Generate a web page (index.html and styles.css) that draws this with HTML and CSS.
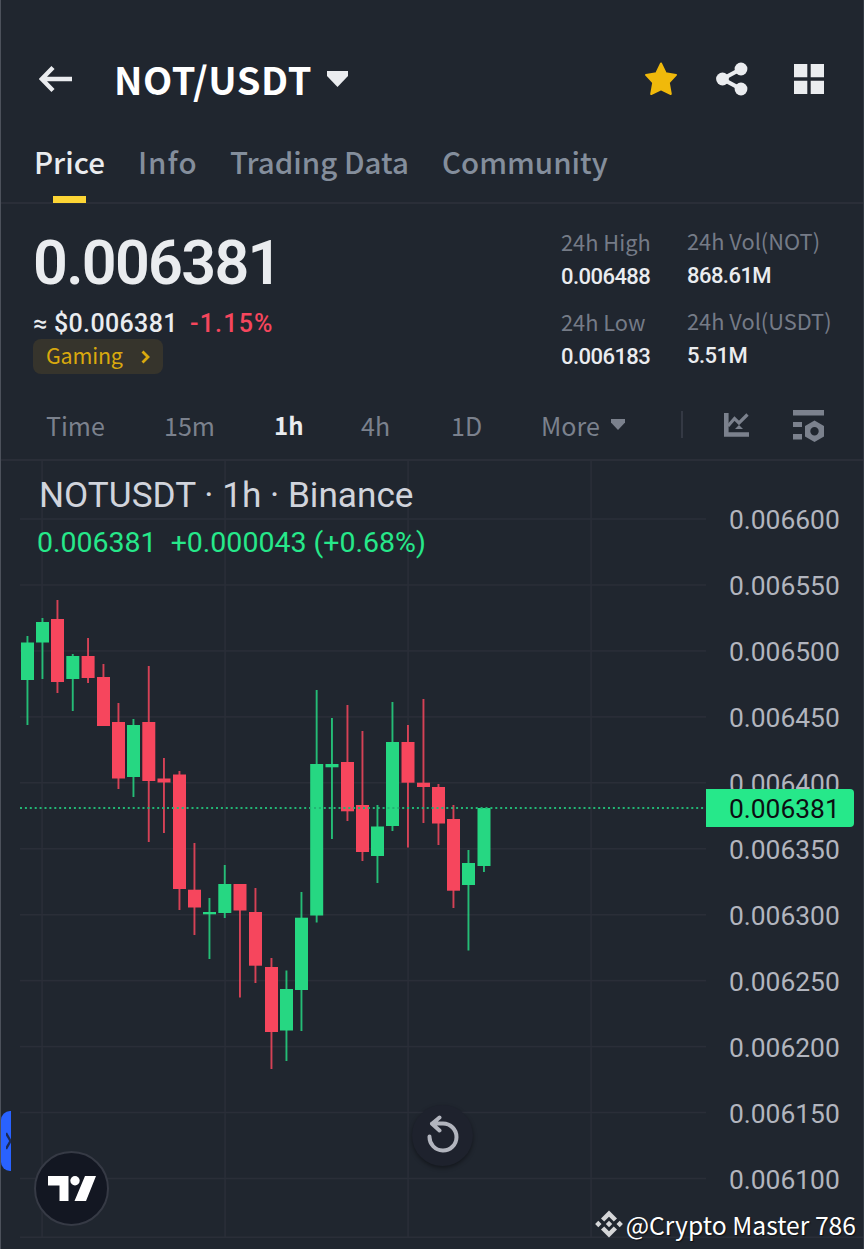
FILE: index.html
```
<!DOCTYPE html>
<html lang="en">
<head>
  <meta charset="UTF-8" />
  <title>NOT/USDT</title>
  <link rel="stylesheet" href="styles.css">
</head>
<body>
  <div class="app">
    <header class="topbar">
      <svg class="back" width="34" height="28" viewBox="0 0 34 28"><path d="M33 14H3M14 2.5L2.8 14L14 25.5" fill="none" stroke="#eaecef" stroke-width="4.4"/></svg>
      <h1>NOT/USDT</h1>
      <svg class="caret" width="21" height="16" viewBox="0 0 21 16"><path d="M0 0H21V5L10.500 16L0 5Z" fill="#eaecef"/></svg>
      <div class="actions">
        <svg width="34" height="34" viewBox="0 0 34 34"><path d="M17 1.500L21.700 11.300L32 12.900L24.800 20.600L26.800 32L17 27.300L7.200 32L9.200 20.600L2 12.900L12.300 11.300Z" fill="#f0b90b" stroke="#f0b90b" stroke-width="2" stroke-linejoin="round"/></svg>
        <svg width="32" height="34" viewBox="0 0 32 34"><path d="M25 7L6.500 17L25 27" fill="none" stroke="#eaecef" stroke-width="4.200"/><g fill="#eaecef"><circle cx="25" cy="7" r="6.400"/><circle cx="6.500" cy="17" r="6.400"/><circle cx="25" cy="27" r="6.400"/></g></svg>
        <svg width="30" height="30" viewBox="0 0 30 30"><path d="M0 0H13.300V13.300H0ZM16.700 0H30V13.300H16.700ZM0 16.700H13.300V30H0ZM16.700 16.700H30V30H16.700Z" fill="#eaecef"/></svg>
      </div>
    </header>

    <nav class="tabs">
      <a class="tab active">Price</a>
      <a class="tab info">Info</a>
      <a class="tab trading">Trading Data</a>
      <a class="tab community">Community</a>
    </nav>

    <section class="summary">
      <div class="quote">
        <div class="last">0.006381</div>
        <div class="fiat"><span class="approx">≈</span><span class="usd">$0.006381</span><span class="change">-1.15%</span></div>
        <div class="tag"><span>Gaming</span><svg width="9" height="14" viewBox="0 0 9 14"><path d="M1.500 1.500L7 7L1.500 12.500" fill="none" stroke="#d9a90e" stroke-width="2.800"/></svg></div>
      </div>
      <div class="stats">
        <div class="stat"><span class="label">24h High</span><span class="value">0.006488</span></div>
        <div class="stat"><span class="label">24h Low</span><span class="value">0.006183</span></div>
      </div>
      <div class="stats volume">
        <div class="stat"><span class="label">24h Vol(NOT)</span><span class="value">868.61M</span></div>
        <div class="stat"><span class="label">24h Vol(USDT)</span><span class="value">5.51M</span></div>
      </div>
    </section>

    <nav class="intervals">
      <a>Time</a>
      <a>15m</a>
      <a class="active">1h</a>
      <a>4h</a>
      <a>1D</a>
      <a class="more">More <svg width="14" height="11" viewBox="0 0 14 11"><path d="M0 0H14V3.500L7 11L0 3.500Z" fill="#7b818d"/></svg></a>
      <i class="divider"></i>
      <svg class="chart-icon" width="25" height="26" viewBox="0 0 25 26"><g fill="none" stroke="#7b818d"><path d="M2.300 1V22.500H25" stroke-width="4.600"/><path d="M4 14L10.500 6.500L15 11L23.500 2.500" stroke-width="3.200"/></g><path d="M11 17L15 13L19 17Z" fill="#7b818d"/></svg>
      <svg class="settings-icon" width="31" height="32" viewBox="0 0 31 32"><path d="M0 0H31V5.500H0ZM0 12H9V17H0ZM0 24H9V29.500H0Z" fill="#7b818d"/><path fill-rule="evenodd" d="M21.500 10.500L31 16V26.500L21.500 32L12 26.500V16ZM21.500 17A4.200 4.200 0 1 0 21.500 25.400A4.200 4.200 0 1 0 21.500 17Z" fill="#7b818d"/></svg>
    </nav>

    <main class="chart">
      <svg class="plot" id="plot" width="862" height="788" viewBox="1 461 862 788"></svg>
      <div class="legend">
        <div class="symbol">NOTUSDT · 1h · Binance</div>
        <div class="ohlc"><span class="price">0.006381</span><span class="delta">+0.000043 (+0.68%)</span></div>
      </div>
      <div class="axis">
        <span>0.006600</span>
        <span>0.006550</span>
        <span>0.006500</span>
        <span>0.006450</span>
        <span>0.006400</span>
        <span>0.006350</span>
        <span>0.006300</span>
        <span>0.006250</span>
        <span>0.006200</span>
        <span>0.006150</span>
        <span>0.006100</span>
      </div>
      <div class="last-price">0.006381</div>
      <div class="drawer"><svg width="5" height="18" viewBox="0 0 5 18"><path d="M0 1L4.500 9L0 17" fill="none" stroke="#1c2a55" stroke-width="2.400"/></svg></div>
      <div class="tv-logo"><svg width="48" height="25" viewBox="0 0 48 25"><path d="M0 0H20.500V25H11.500V9.500H0ZM37 0H48L38 25H26.500Z" fill="#fff"/><circle cx="27" cy="4.800" r="4.700" fill="#fff"/></svg></div>
      <div class="reset"><svg width="32" height="38" viewBox="0 0 32 38"><path d="M2.500 21.500A13.500 13.500 0 1 0 16 8.500H5M12.500 2.500L5 8.800L12.500 15.500" fill="none" stroke="#b2b5be" stroke-width="4" stroke-linecap="round" stroke-linejoin="round"/></svg></div>
      <div class="watermark">
        <svg width="28" height="28" viewBox="0 0 28 28"><path d="M14 .5L22 8.500L18.800 11.600L14 6.800L9.200 11.600L6 8.500ZM14 27.500L6 19.500L9.200 16.400L14 21.200L18.800 16.400L22 19.500ZM14 10.800L17.200 14L14 17.200L10.800 14ZM3.300 10.800L6.500 14L3.300 17.200L.1 14ZM24.700 10.800L27.900 14L24.700 17.200L21.500 14Z" fill="#d5d6d8"/></svg>
        <span>@Crypto Master 786</span>
      </div>
    </main>
  </div>

  <script>
    // x, body top, body bottom, high, low, up
    const candles = [
      [21, 642.5, 680, 636, 725, 1],
      [36, 622, 642.5, 618, 679, 1],
      [51, 619, 682, 600, 693, 0],
      [66.3, 656, 679, 654, 711, 1],
      [81.6, 656, 678, 638, 683, 0],
      [97, 677, 726, 664, 726, 0],
      [112, 722, 778.5, 703, 789, 0],
      [127, 725, 777, 719, 797, 1],
      [142.3, 722, 781, 666, 842, 0],
      [157.5, 778.5, 782.5, 758, 833, 0],
      [173, 774.5, 889, 771, 910, 0],
      [188, 889.7, 907.5, 843, 935, 0],
      [203, 912, 914.3, 898, 959, 1],
      [218.3, 884, 913, 865, 918, 1],
      [233.5, 884, 910.5, 884, 997.5, 0],
      [249, 912, 965.7, 888, 983, 0],
      [265, 967, 1032, 958, 1069, 0],
      [280, 989, 1030.5, 970.5, 1061, 1],
      [295, 917.7, 990, 892, 1031, 1],
      [310.2, 764, 915.5, 690, 922.5, 1],
      [325.5, 764, 767.3, 718, 839, 1],
      [341, 762, 811.3, 705, 821, 0],
      [356, 805, 852, 731, 861, 0],
      [371, 826.5, 856, 805, 883, 1],
      [386, 742, 826, 702, 831, 1],
      [401.5, 742, 782.7, 725, 847.5, 0],
      [417, 782.7, 787, 699, 823, 0],
      [432, 787, 823.5, 784, 845, 0],
      [447, 819, 890.7, 805, 908, 0],
      [462, 863, 885, 850, 950.5, 1],
      [477.5, 808, 866, 808, 872, 1]
    ];

    let out = '';
    for (const x of [42, 225, 408, 591]) {
      out += `<rect class="grid" x="${x - 0.7}" y="461" width="1.6" height="776" />`;
    }
    for (let i = 0; i < 11; i++) {
      out += `<rect class="grid" x="20" y="${518.2 + i * 65.95}" width="686" height="1.6" />`;
    }
    out += '<rect class="grid" x="20" y="1236.500" width="843" height="1.600" />';

    candles.forEach(([x, top, bottom, high, low, up]) => {
      const cls = up ? 'up' : 'down';
      out += `<rect class="${cls} wick" x="${x + 5.5}" y="${high}" width="1.9" height="${low - high}" />`;
      out += `<rect class="${cls}" x="${x}" y="${top}" width="13" height="${bottom - top}" />`;
    });
    out += '<line class="price-line" x1="20" y1="808" x2="706" y2="808" />';
    document.getElementById('plot').innerHTML = out;
  </script>
</body>
</html>
```
FILE: styles.css
```
:root {
  --bg: #20262f;
  --line: #2a2e38;
  --text: #eaecef;
  --muted: #848e9c;
  --up: #26d782;
  --down: #f6465d;
  --yellow: #fcd535;
}

* {
  box-sizing: border-box;
}

body {
  margin: 0;
  background: var(--bg);
  color: var(--text);
  font-family: "Noto Sans CJK SC", "Noto Sans", sans-serif;
}

svg {
  display: block;
  flex: none;
}

.app {
  width: 864px;
  height: 1249px;
  overflow: hidden;
  border-left: 1px solid #4c515b;
  border-right: 1px solid #343a43;
  white-space: nowrap;
}

.topbar {
  display: flex;
  align-items: center;
  height: 130px;
  padding: 28px 39px 0 38px;
}

h1 {
  margin: 0 0 0 41px;
  width: 213px;
  font-size: 38px;
  line-height: 60px;
  font-weight: 700;
  letter-spacing: 0.6px;
  color: #fff;
}

.actions {
  display: flex;
  align-items: center;
  margin-left: auto;
}

.actions svg + svg {
  margin-left: 38px;
}

.actions svg:last-child {
  margin-left: 46px;
}

.tabs {
  display: flex;
  height: 74px;
  padding-left: 33px;
  border-bottom: 2px solid var(--line);
  font-size: 29.5px;
  line-height: 63px;
  font-weight: 500;
  color: var(--muted);
}

.tab {
  width: 104px;
}

.tab.info {
  width: 92px;
  letter-spacing: 1px;
}

.tab.trading {
  width: 212px;
}

.tab.active {
  color: var(--text);
}

.tab.active::after {
  content: "";
  display: block;
  width: 33px;
  height: 7px;
  margin: 3px 0 0 19px;
  background: var(--yellow);
}

.summary {
  display: flex;
  height: 190px;
  padding: 26px 0 0 32px;
}

.quote {
  width: 528px;
  font-family: Roboto, sans-serif;
}

.last {
  font-size: 61px;
  line-height: 67px;
  font-weight: 600;
  letter-spacing: -1.7px;
}

.fiat {
  display: flex;
  height: 42px;
  font-size: 25px;
  line-height: 53px;
  font-weight: 500;
}

.approx {
  width: 21px;
}

.usd {
  width: 136px;
  letter-spacing: 0.35px;
}

.change {
  color: var(--down);
  letter-spacing: 1.2px;
}

.tag {
  display: flex;
  align-items: center;
  justify-content: space-between;
  width: 130px;
  height: 35px;
  padding: 0 13px;
  border-radius: 8px;
  background: #36342c;
  color: #d9a90e;
  font-family: "Noto Sans CJK SC", sans-serif;
  font-size: 21.500px;
  line-height: 32px;
}

.tag span {
  margin-top: -3px;
  letter-spacing: -0.2px;
}

.stats {
  width: 126px;
}

.stats.volume {
  margin-top: -1px;
}

.stat {
  display: flex;
  flex-direction: column;
  height: 80px;
}

.label {
  font-size: 21.8px;
  line-height: 24px;
  color: #757b87;
}

.value {
  margin-top: 6px;
  font-family: Roboto, sans-serif;
  font-size: 22px;
  line-height: 34px;
  font-weight: 500;
  letter-spacing: -0.55px;
}

.intervals {
  display: flex;
  height: 67px;
  padding: 0 0 0 45px;
  border-bottom: 2px solid var(--line);
  font-size: 25px;
  line-height: 62px;
  color: #7b818d;
}

.intervals a {
  width: 118px;
}

.intervals .active {
  color: var(--text);
  font-size: 24px;
  font-weight: 700;
}

.intervals a:nth-child(2) {
  width: 110px;
}

.intervals a:nth-child(3) {
  width: 87px;
}

.intervals a:nth-child(4) {
  width: 90px;
}

.intervals a:nth-child(5) {
  width: 90px;
}

.intervals .more {
  display: flex;
  gap: 11px;
  width: 140px;
}

.more svg {
  margin-top: 25px;
}

.divider {
  width: 2px;
  height: 27px;
  margin: 17px 41px 0 0;
  background: #343944;
}

.chart-icon {
  margin-top: 18px;
}

.settings-icon {
  margin: 16px 0 0 44px;
}

.chart {
  position: relative;
  height: 788px;
  font-family: Roboto, sans-serif;
}

.grid {
  fill: #2a2e38;
}

.up {
  fill: var(--up);
}

.down {
  fill: var(--down);
}

.wick {
  opacity: 0.85;
}

.price-line {
  stroke: #22b574;
  stroke-width: 1.8;
  stroke-dasharray: 2 2.9;
}

.legend {
  position: absolute;
  top: 5px;
  left: 32px;
  padding-left: 4px;
}

.symbol {
  padding-left: 2px;
  font-size: 35.2px;
  line-height: 58px;
  color: #d1d4dc;
}

.ohlc {
  display: flex;
  gap: 14px;
  font-size: 28.5px;
  line-height: 38px;
  color: #26e88a;
}

.axis {
  position: absolute;
  top: 26px;
  left: 728px;
  font-size: 26.4px;
  line-height: 66px;
  color: #b2b5be;
}

.axis span {
  display: block;
}

.last-price {
  position: absolute;
  top: 328px;
  left: 705px;
  width: 148px;
  height: 38px;
  padding-left: 23px;
  border-radius: 0 4px 4px 0;
  background: #26e88a;
  color: #0c0e12;
  font-size: 26.4px;
  line-height: 40px;
}

.drawer {
  position: absolute;
  top: 650px;
  left: 0;
  display: flex;
  align-items: center;
  justify-content: flex-end;
  width: 10px;
  height: 60px;
  border-radius: 9px 0 0 9px;
  background: #2962ff;
}

.tv-logo {
  position: absolute;
  top: 690px;
  left: 33px;
  display: grid;
  place-items: center;
  width: 75px;
  height: 75px;
  border: 2px solid #363a45;
  border-radius: 50%;
  background: #131722;
}

.reset {
  position: absolute;
  top: 644px;
  left: 411px;
  display: grid;
  place-items: center;
  width: 61px;
  height: 61px;
  padding-bottom: 4px;
  border-radius: 50%;
  background: #1e222d;
  box-shadow: 0 2px 4px rgba(0, 0, 0, 0.4);
}

.watermark {
  position: absolute;
  top: 745px;
  right: 7px;
  display: flex;
  align-items: center;
  gap: 3px;
  color: #fff;
  font-family: "Noto Sans CJK SC", sans-serif;
  font-size: 24.7px;
  line-height: 36px;
  text-shadow: 1px 1px 1px rgba(0, 0, 0, 0.6);
}
```
